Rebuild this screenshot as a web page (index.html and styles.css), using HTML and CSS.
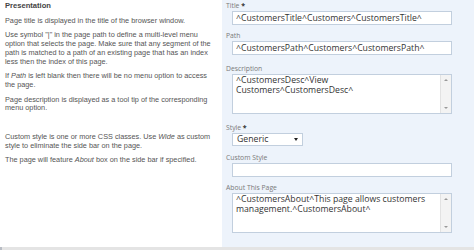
FILE: index.html
```html
<!DOCTYPE html>
<html lang="en">
<head>
<meta charset="UTF-8">
<title>Page Properties</title>
<link rel="stylesheet" href="styles.css">
</head>
<body>

<div class="page">

<div class="help">
<h3>Presentation</h3>
<p>Page title is displayed in the title of the browser window.</p>
<p>Use symbol "|" in the page path to define a multi-level menu option that selects the page. Make sure that any segment of the path is matched to a path of an existing page that has an index less then the index of this page.</p>
<p>If <i>Path</i> is left blank then there will be no menu option to access the page.</p>
<p>Page description is displayed as a tool tip of the corresponding menu option.</p>
<p class="gap">Custom style is one or more CSS classes. Use <i>Wide</i> as custom style to eliminate the side bar on the page.</p>
<p>The page will feature <i>About</i> box on the side bar if specified.</p>
</div>

<div class="form">

<div class="field f-title">
<label>Title <b>*</b></label>
<input class="box" type="text" value="^CustomersTitle^Customers^CustomersTitle^">
</div>

<div class="field f-path">
<label>Path</label>
<input class="box" type="text" value="^CustomersPath^Customers^CustomersPath^">
</div>

<div class="field f-desc">
<label>Description</label>
<div class="area">
<textarea>^CustomersDesc^View Customers^CustomersDesc^</textarea>
<div class="scroll"><span class="up"></span><span class="down"></span></div>
</div>
</div>

<div class="field f-style">
<label>Style <b>*</b></label>
<div class="select">Generic<span class="caret"></span></div>
</div>

<div class="field f-custom">
<label>Custom Style</label>
<input class="box" type="text" value="">
</div>

<div class="field f-about">
<label>About This Page</label>
<div class="area">
<textarea>^CustomersAbout^This page allows customers management.^CustomersAbout^</textarea>
<div class="scroll"><span class="up"></span><span class="down"></span></div>
</div>
</div>

</div>

</div>

<div class="bar"></div>

</body>
</html>
```

FILE: styles.css
```css
body {
  margin: 0;
  padding: 0;
  background-color: #fff;
  font-family: 'Liberation Sans', Arial, sans-serif;
}

.page {
  display: flex;
  height: 247px;
}

.help {
  width: 222px;
  box-sizing: border-box;
  padding: 2px 5px 0 5px;
  font-size: 7.3px;
  line-height: 8.7px;
  color: #555;
}

.help h3 {
  margin: 0 0 6px;
  font-size: 7.6px;
  color: #444;
}

.help p {
  margin: 0 0 6px;
}

.help p.gap {
  margin-top: 20px;
}

.form {
  flex: 1;
  background-color: #edf3fb;
  padding: 0 0 0 4px;
  font-family: 'Open Sans', 'Noto Sans', sans-serif;
}

.field {
  margin-bottom: 5px;
}

.field label {
  display: block;
  height: 11px;
  line-height: 11px;
  font-size: 6.8px;
  color: #7a7a7a;
}

.field label b {
  color: #333;
  font-size: 7px;
}

.box,
.area,
.select {
  margin-left: 6px;
  width: 220px;
  box-sizing: border-box;
  background-color: #fff;
  border: 1px solid #c2cfde;
  font-family: 'Open Sans', 'Noto Sans', sans-serif;
  font-size: 8.7px;
  color: #333;
}

.box {
  display: block;
  height: 14px;
  padding: 0 3px;
  outline: none;
}

.f-path { margin-bottom: 8px; }
.f-desc { margin-bottom: 8px; }
.f-style { margin-bottom: 6px; }

.area {
  display: flex;
  height: 40px;
}

.area textarea {
  flex: 1;
  border: none;
  resize: none;
  overflow: hidden;
  padding: 1px 3px;
  margin: 0;
  font: inherit;
  line-height: 9.6px;
  color: #333;
  outline: none;
}

.scroll {
  width: 10px;
  background-color: #f3f3f3;
  border-left: 1px solid #e2e2e2;
  display: flex;
  flex-direction: column;
  justify-content: space-between;
  align-items: center;
  padding: 4px 0;
}

.up,
.down {
  width: 0;
  height: 0;
  border-left: 2px solid transparent;
  border-right: 2px solid transparent;
}

.up { border-bottom: 2px solid #999; }
.down { border-top: 2px solid #999; }

.select {
  width: 71px;
  height: 13px;
  line-height: 11px;
  padding: 0 4px;
  display: flex;
  justify-content: space-between;
  align-items: center;
}

.caret {
  width: 0;
  height: 0;
  border-left: 2.5px solid transparent;
  border-right: 2.5px solid transparent;
  border-top: 3px solid #222;
}

.bar {
  height: 3px;
  background-color: #e4e4e4;
  border-left: 2px solid #b8bcc4;
}
```
